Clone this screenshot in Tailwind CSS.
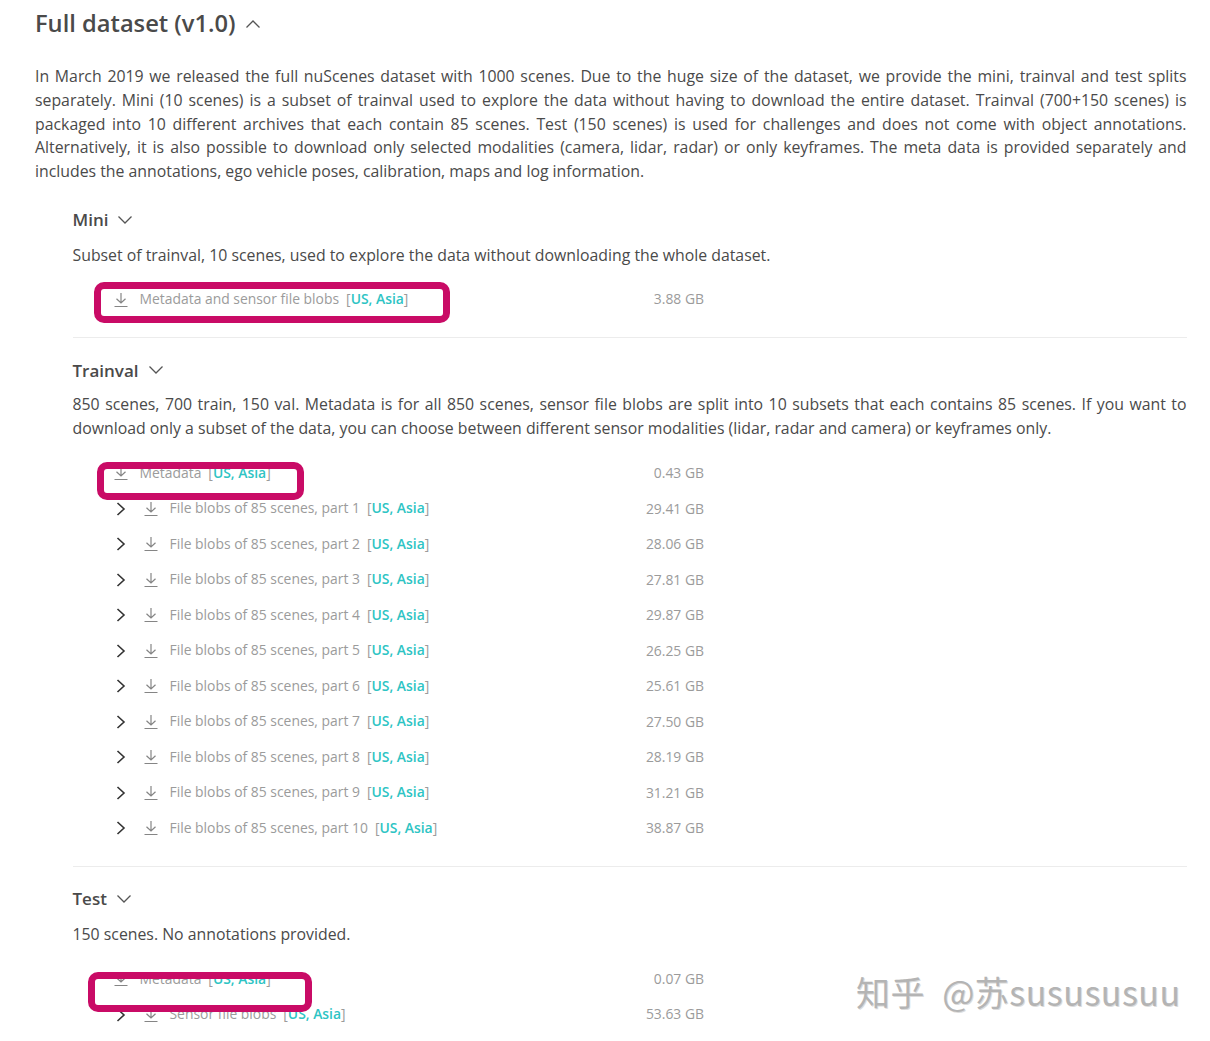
<!DOCTYPE html>
<html><head><meta charset="utf-8"><script src="https://cdn.jsdelivr.net/npm/@tailwindcss/browser@4"></script></head>
<body class="bg-white">
<svg class="hidden"><defs>
<symbol id="dl" viewBox="0 0 16 16"><path d="M8 1V11M3.500 6.800 8 11l4.500-4.200M1.500 14.500h13" fill="none" stroke="#858585" stroke-width="1.200"/></symbol>
<symbol id="ch" viewBox="0 0 12 16"><path d="M2.500 2 9 8l-6.500 6" fill="none" stroke="#333" stroke-width="1.600"/></symbol>
<symbol id="dn" viewBox="0 0 16 10"><path d="M1.500 1.500 8 8l6.500-6.500" fill="none" stroke="#555" stroke-width="1.300"/></symbol>
</defs></svg>
<div class="relative w-[1210px] h-[1041px] overflow-hidden font-['Open_Sans',sans-serif] text-[#4a4a4a]">
<div class="pl-[35px] pr-[23.500px] pt-[8px]">
<h2 class="flex items-center gap-[9px] h-[31px] text-[23.700px] font-semibold"><span>Full dataset (v1.0)</span><svg class="w-[16px] h-[10px] rotate-180"><use href="#dn"/></svg></h2>
<p class="mt-[26px] text-[15.840px] leading-[23.8px] text-justify">In March 2019 we released the full nuScenes dataset with 1000 scenes. Due to the huge size of the dataset, we provide the mini, trainval and test splits separately. Mini (10 scenes) is a subset of trainval used to explore the data without having to download the entire dataset. Trainval (700+150 scenes) is packaged into 10 different archives that each contain 85 scenes. Test (150 scenes) is used for challenges and does not come with object annotations. Alternatively, it is also possible to download only selected modalities (camera, lidar, radar) or only keyframes. The meta data is provided separately and includes the annotations, ego vehicle poses, calibration, maps and log information.</p>
<div class="pl-[37.500px]">
<h3 class="mt-[24px] flex items-center gap-[9px] h-[24px] text-[17px] font-semibold"><span>Mini</span><svg class="w-[16px] h-[10px]"><use href="#dn"/></svg></h3>
<p class="mt-[11px] text-[15.840px] leading-[24px]">Subset of trainval, 10 scenes, used to explore the data without downloading the whole dataset.</p>
<div class="mt-[15px] text-[13.900px] text-[#9b9b9b]">
<div class="flex items-center h-[35.500px] w-[631.500px]"><svg class="ml-[40px] w-[16px] h-[16px] mr-[11px]"><use href="#dl"/></svg><span>Metadata and sensor file blobs</span><span class="ml-[7px]">[<b class="font-semibold text-[#2ec4c4]">US, Asia</b>]</span><span class="ml-auto">3.88 GB</span></div>
</div>
<hr class="mt-[20px] border-[#ececec]">
<h3 class="mt-[20px] flex items-center gap-[9px] h-[24px] text-[17px] font-semibold"><span>Trainval</span><svg class="w-[16px] h-[10px]"><use href="#dn"/></svg></h3>
<p class="mt-[10px] text-[15.840px] leading-[24px] text-justify">850 scenes, 700 train, 150 val. Metadata is for all 850 scenes, sensor file blobs are split into 10 subsets that each contains 85 scenes. If you want to download only a subset of the data, you can choose between different sensor modalities (lidar, radar and camera) or keyframes only.</p>
<div class="mt-[15px] text-[13.900px] text-[#9b9b9b]">
<div class="flex items-center h-[35.500px] w-[631.500px]"><svg class="ml-[40px] w-[16px] h-[16px] mr-[11px]"><use href="#dl"/></svg><span>Metadata</span><span class="ml-[7px]">[<b class="font-semibold text-[#2ec4c4]">US, Asia</b>]</span><span class="ml-auto pt-[1px]">0.43 GB</span></div>
<div class="flex items-center h-[35.500px] w-[631.500px]"><svg class="ml-[42px] w-[12px] h-[16px] mr-[16px]"><use href="#ch"/></svg><svg class="w-[16px] h-[16px] mr-[11px]"><use href="#dl"/></svg><span>File blobs of 85 scenes, part 1</span><span class="ml-[7px]">[<b class="font-semibold text-[#2ec4c4]">US, Asia</b>]</span><span class="ml-auto pt-[1px]">29.41 GB</span></div>
<div class="flex items-center h-[35.500px] w-[631.500px]"><svg class="ml-[42px] w-[12px] h-[16px] mr-[16px]"><use href="#ch"/></svg><svg class="w-[16px] h-[16px] mr-[11px]"><use href="#dl"/></svg><span>File blobs of 85 scenes, part 2</span><span class="ml-[7px]">[<b class="font-semibold text-[#2ec4c4]">US, Asia</b>]</span><span class="ml-auto pt-[1px]">28.06 GB</span></div>
<div class="flex items-center h-[35.500px] w-[631.500px]"><svg class="ml-[42px] w-[12px] h-[16px] mr-[16px]"><use href="#ch"/></svg><svg class="w-[16px] h-[16px] mr-[11px]"><use href="#dl"/></svg><span>File blobs of 85 scenes, part 3</span><span class="ml-[7px]">[<b class="font-semibold text-[#2ec4c4]">US, Asia</b>]</span><span class="ml-auto pt-[1px]">27.81 GB</span></div>
<div class="flex items-center h-[35.500px] w-[631.500px]"><svg class="ml-[42px] w-[12px] h-[16px] mr-[16px]"><use href="#ch"/></svg><svg class="w-[16px] h-[16px] mr-[11px]"><use href="#dl"/></svg><span>File blobs of 85 scenes, part 4</span><span class="ml-[7px]">[<b class="font-semibold text-[#2ec4c4]">US, Asia</b>]</span><span class="ml-auto pt-[1px]">29.87 GB</span></div>
<div class="flex items-center h-[35.500px] w-[631.500px]"><svg class="ml-[42px] w-[12px] h-[16px] mr-[16px]"><use href="#ch"/></svg><svg class="w-[16px] h-[16px] mr-[11px]"><use href="#dl"/></svg><span>File blobs of 85 scenes, part 5</span><span class="ml-[7px]">[<b class="font-semibold text-[#2ec4c4]">US, Asia</b>]</span><span class="ml-auto pt-[1px]">26.25 GB</span></div>
<div class="flex items-center h-[35.500px] w-[631.500px]"><svg class="ml-[42px] w-[12px] h-[16px] mr-[16px]"><use href="#ch"/></svg><svg class="w-[16px] h-[16px] mr-[11px]"><use href="#dl"/></svg><span>File blobs of 85 scenes, part 6</span><span class="ml-[7px]">[<b class="font-semibold text-[#2ec4c4]">US, Asia</b>]</span><span class="ml-auto pt-[1px]">25.61 GB</span></div>
<div class="flex items-center h-[35.500px] w-[631.500px]"><svg class="ml-[42px] w-[12px] h-[16px] mr-[16px]"><use href="#ch"/></svg><svg class="w-[16px] h-[16px] mr-[11px]"><use href="#dl"/></svg><span>File blobs of 85 scenes, part 7</span><span class="ml-[7px]">[<b class="font-semibold text-[#2ec4c4]">US, Asia</b>]</span><span class="ml-auto pt-[1px]">27.50 GB</span></div>
<div class="flex items-center h-[35.500px] w-[631.500px]"><svg class="ml-[42px] w-[12px] h-[16px] mr-[16px]"><use href="#ch"/></svg><svg class="w-[16px] h-[16px] mr-[11px]"><use href="#dl"/></svg><span>File blobs of 85 scenes, part 8</span><span class="ml-[7px]">[<b class="font-semibold text-[#2ec4c4]">US, Asia</b>]</span><span class="ml-auto pt-[1px]">28.19 GB</span></div>
<div class="flex items-center h-[35.500px] w-[631.500px]"><svg class="ml-[42px] w-[12px] h-[16px] mr-[16px]"><use href="#ch"/></svg><svg class="w-[16px] h-[16px] mr-[11px]"><use href="#dl"/></svg><span>File blobs of 85 scenes, part 9</span><span class="ml-[7px]">[<b class="font-semibold text-[#2ec4c4]">US, Asia</b>]</span><span class="ml-auto pt-[1px]">31.21 GB</span></div>
<div class="flex items-center h-[35.500px] w-[631.500px]"><svg class="ml-[42px] w-[12px] h-[16px] mr-[16px]"><use href="#ch"/></svg><svg class="w-[16px] h-[16px] mr-[11px]"><use href="#dl"/></svg><span>File blobs of 85 scenes, part 10</span><span class="ml-[7px]">[<b class="font-semibold text-[#2ec4c4]">US, Asia</b>]</span><span class="ml-auto pt-[1px]">38.87 GB</span></div>
</div>
<hr class="mt-[20px] border-[#ececec]">
<h3 class="mt-[20px] flex items-center gap-[9px] h-[24px] text-[17px] font-semibold"><span>Test</span><svg class="w-[16px] h-[10px]"><use href="#dn"/></svg></h3>
<p class="mt-[11px] text-[15.840px] leading-[24px]">150 scenes. No annotations provided.</p>
<div class="mt-[15.500px] text-[13.900px] text-[#9b9b9b]">
<div class="flex items-center h-[35.500px] w-[631.500px]"><svg class="ml-[40px] w-[16px] h-[16px] mr-[11px]"><use href="#dl"/></svg><span>Metadata</span><span class="ml-[7px]">[<b class="font-semibold text-[#2ec4c4]">US, Asia</b>]</span><span class="ml-auto">0.07 GB</span></div>
<div class="flex items-center h-[35.500px] w-[631.500px]"><svg class="ml-[42px] w-[12px] h-[16px] mr-[16px]"><use href="#ch"/></svg><svg class="w-[16px] h-[16px] mr-[11px]"><use href="#dl"/></svg><span>Sensor file blobs</span><span class="ml-[7px]">[<b class="font-semibold text-[#2ec4c4]">US, Asia</b>]</span><span class="ml-auto">53.63 GB</span></div>
</div>
</div>
</div>
<div class="absolute left-[94px] top-[282px] w-[356px] h-[41px] border-[7px] border-[#c90b66] rounded-[10px]"></div>
<div class="absolute left-[97px] top-[462px] w-[207px] h-[38px] border-[7px] border-[#c90b66] rounded-[10px]"></div>
<div class="absolute left-[88px] top-[972px] w-[224px] h-[40px] border-[7px] border-[#c90b66] rounded-[10px]"></div>
<div class="absolute left-[856px] top-[970px] text-[34px] leading-[44px] tracking-[0.5px] text-[#b4b4b4] [text-shadow:1px_1px_0_#dcdcdc] font-['Noto_Sans_CJK_SC','Noto_Sans',sans-serif]">知乎<span class="ml-[9px]"> </span>@苏susususuu</div>
</div>
</body></html>
